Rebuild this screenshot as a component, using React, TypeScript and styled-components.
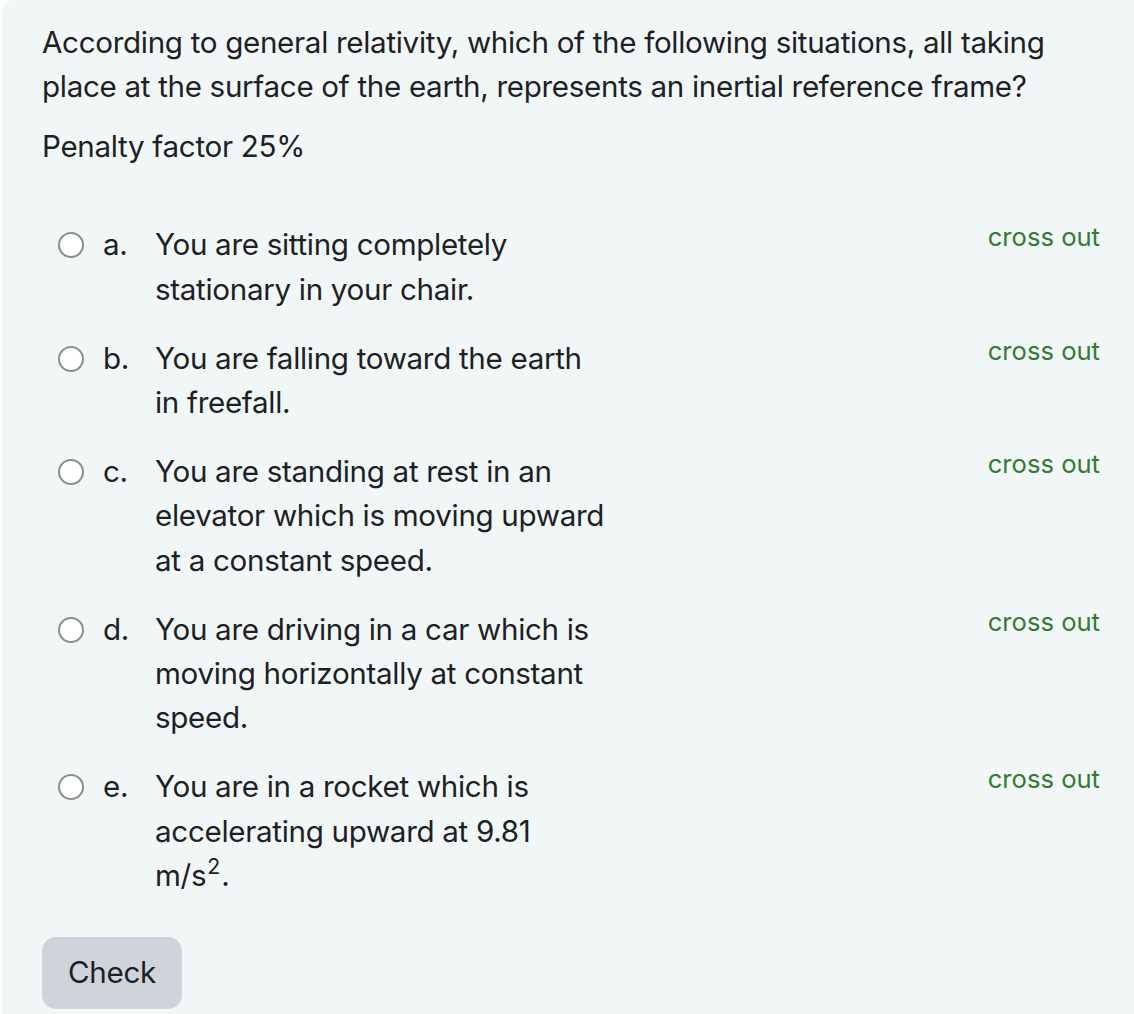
import React from "react";
import styled, { createGlobalStyle } from "styled-components";

const Global = createGlobalStyle`
  html, body { margin: 0; padding: 0; background: #ffffff; }
  body { font-family: Inter, "Noto Sans", "Liberation Sans", sans-serif; color: #1d2125; }
`;

const Formulation = styled.div`
  margin-left: 2px;
  background: #f1f7f7;
  border-top-left-radius: 12px;
  padding: 20px 34px 6px 40px;
  font-size: 29.6px;
  line-height: 44.4px;
  letter-spacing: -0.32px;
`;

const QText = styled.p`
  margin: 0;
`;

const Penalty = styled.p`
  margin: 15px 0 0;
`;

const Answers = styled.div`
  margin-top: 54px;
  display: flex;
  flex-direction: column;
  gap: 24.5px;
`;

const Option = styled.div`
  display: flex;
  align-items: flex-start;
  padding-left: 16px;
`;

const Radio = styled.span`
  flex: none;
  width: 26px;
  height: 26px;
  box-sizing: border-box;
  border: 2px solid #8b8e92;
  border-radius: 50%;
  background: #ffffff;
  margin-top: 10px;
`;

const Letter = styled.span`
  flex: none;
  width: 52px;
  margin-left: 19px;
`;

const Text = styled.div`
  flex: none;
  width: 451px;
`;

const NoWrap = styled.span`
  white-space: nowrap;
`;

const Sup = styled.sup`
  font-size: 0.72em;
  line-height: 0;
  letter-spacing: 0;
  vertical-align: 0.55em;
  margin: 0 1px;
`;

const Spacer = styled.div`
  flex: 1;
`;

const CrossOut = styled.a`
  flex: none;
  color: #357a32;
  font-size: 25.6px;
  line-height: 30px;
  letter-spacing: 0;
  text-decoration: none;
  cursor: pointer;
`;

const CheckButton = styled.button`
  margin-top: 39px;
  height: 72px;
  padding: 0 26px;
  border: none;
  border-radius: 14px;
  background: #ced4da;
  color: #1d2125;
  font-family: inherit;
  font-size: 29.6px;
  line-height: 44.4px;
  letter-spacing: -0.32px;
`;

const options: { letter: string; text: React.ReactNode }[] = [
  { letter: "a.", text: "You are sitting completely stationary in your chair." },
  { letter: "b.", text: "You are falling toward the earth in freefall." },
  { letter: "c.", text: "You are standing at rest in an elevator which is moving upward at a constant speed." },
  { letter: "d.", text: "You are driving in a car which is moving horizontally at constant speed." },
  {
    letter: "e.",
    text: (
      <>
        You are in a rocket which is accelerating upward at 9.81{" "}
        <NoWrap>
          m/s<Sup>2</Sup>.
        </NoWrap>
      </>
    ),
  },
];

export default function App() {
  return (
    <>
      <Global />
      <Formulation>
        <QText>
          According to general relativity, which of the following situations, all taking place at the surface of the
          earth, represents an inertial reference frame?
        </QText>
        <Penalty>Penalty factor 25%</Penalty>
        <Answers>
          {options.map((o) => (
            <Option key={o.letter}>
              <Radio />
              <Letter>{o.letter}</Letter>
              <Text>{o.text}</Text>
              <Spacer />
              <CrossOut>cross out</CrossOut>
            </Option>
          ))}
        </Answers>
        <CheckButton>Check</CheckButton>
      </Formulation>
    </>
  );
}
